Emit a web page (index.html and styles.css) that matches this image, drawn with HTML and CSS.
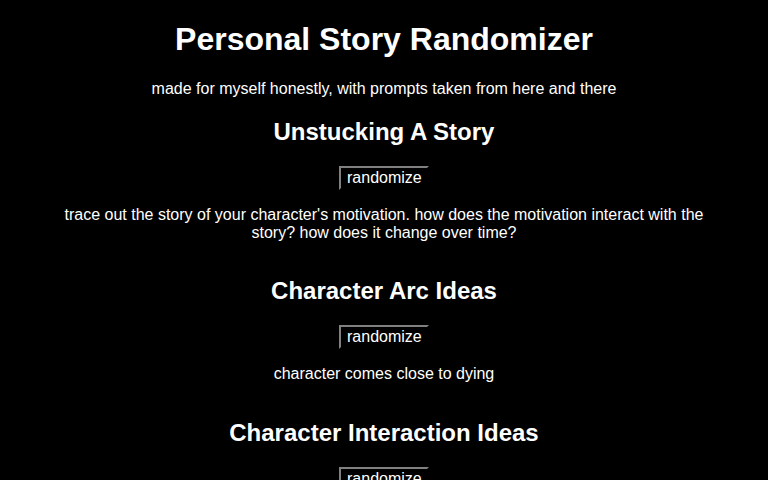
FILE: index.html
```html
<!DOCTYPE html>
<html>
<head>
<meta charset="utf-8">
<title>Personal Story Randomizer</title>
<link rel="stylesheet" href="styles.css">
</head>
<body>
  <h1 class="title">Personal Story Randomizer</h1>
  <p class="tagline">made for myself honestly, with prompts taken from here and there</p>

  <section class="block">
    <h2 class="block-title">Unstucking A Story</h2>
    <div class="controls"><button class="rand-btn" type="button">randomize</button></div>
    <p class="prompt">trace out the story of your character's motivation. how does the motivation interact with the story? how does it change over time?</p>
  </section>

  <section class="block">
    <h2 class="block-title">Character Arc Ideas</h2>
    <div class="controls"><button class="rand-btn" type="button">randomize</button></div>
    <p class="prompt">character comes close to dying</p>
  </section>

  <section class="block">
    <h2 class="block-title">Character Interaction Ideas</h2>
    <div class="controls"><button class="rand-btn" type="button">randomize</button></div>
    <p class="prompt">two characters share a secret</p>
  </section>
</body>
</html>
```
FILE: styles.css
```css
html, body {
  background: #000;
  color: #fff;
}

body {
  margin: 0 8px 8px;
  font-family: "Liberation Sans", Arial, sans-serif;
  text-align: center;
}

.title {
  font-size: 32px;
  margin: 21.44px 0;
}

.tagline {
  font-size: 16px;
  margin: 16px 0;
}

.block-title {
  font-size: 24px;
  margin: 19.92px 0;
}

.controls {
  line-height: 0;
}

.rand-btn {
  font-family: "Liberation Sans", Arial, sans-serif;
  font-size: 16px;
  line-height: 18px;
  color: #fff;
  background: #000;
  padding: 1px 6px;
  border-width: 2px;
  border-style: solid;
  border-color: #808080 #000 #000 #808080;
  width: 90px;
  height: 24px;
  box-sizing: border-box;
  cursor: pointer;
  vertical-align: top;
}

.prompt {
  font-size: 16px;
  line-height: 18px;
  margin: 16px 56px 35.5px;
}
```
